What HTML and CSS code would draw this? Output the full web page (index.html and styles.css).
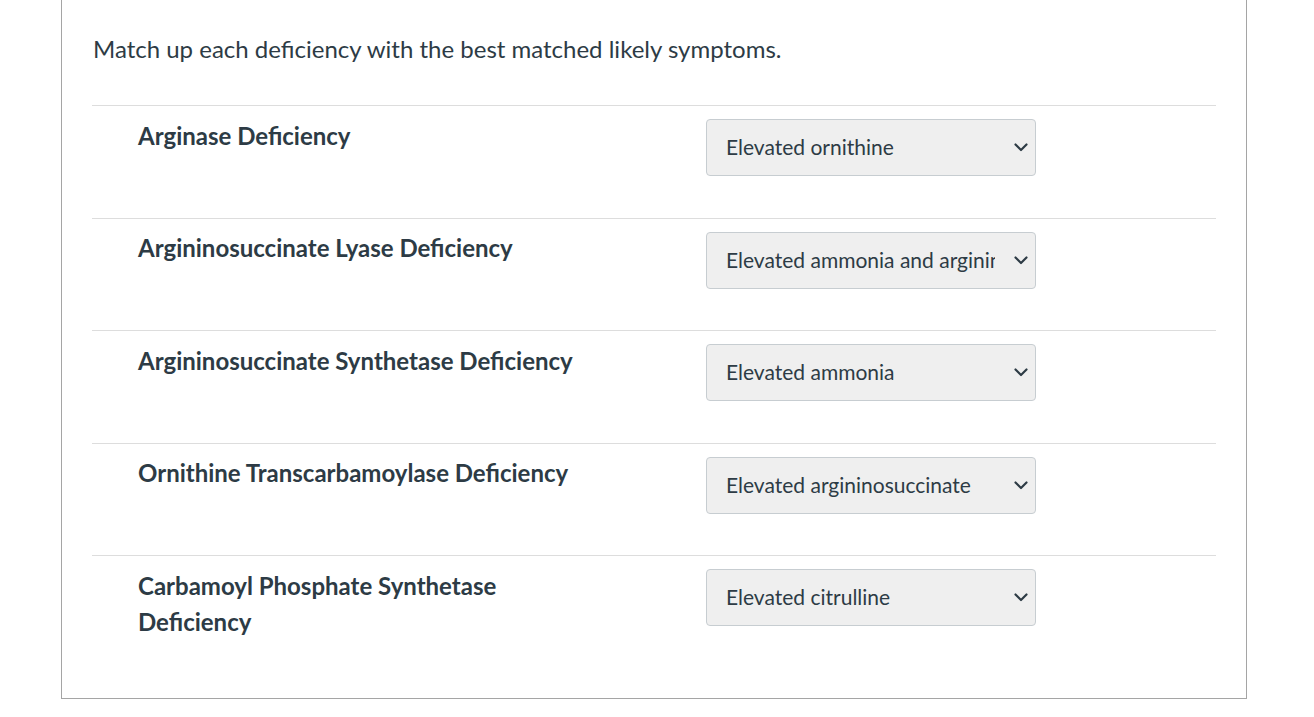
FILE: index.html
```html
<!DOCTYPE html>
<html lang="en">
<head>
<meta charset="utf-8">
<title>Matching question</title>
<link rel="stylesheet" href="styles.css">
</head>
<body>
<div class="question">
  <p class="prompt">Match up each deficiency with the best matched likely symptoms.</p>
  <div class="answers">
    <div class="row">
      <div class="label">Arginase Deficiency</div>
      <div class="select-wrap">
        <select class="choice"><option>Elevated ornithine</option></select>
        <svg class="chev" viewBox="0 0 14 9" width="14" height="9"><path d="M1.5 1.5 L7 7 L12.5 1.5" fill="none" stroke="#2d3b45" stroke-width="2.2" stroke-linecap="round" stroke-linejoin="round"/></svg>
      </div>
    </div>
    <div class="row">
      <div class="label">Argininosuccinate Lyase Deficiency</div>
      <div class="select-wrap">
        <select class="choice"><option>Elevated ammonia and arginine</option></select>
        <svg class="chev" viewBox="0 0 14 9" width="14" height="9"><path d="M1.5 1.5 L7 7 L12.5 1.5" fill="none" stroke="#2d3b45" stroke-width="2.2" stroke-linecap="round" stroke-linejoin="round"/></svg>
      </div>
    </div>
    <div class="row">
      <div class="label">Argininosuccinate Synthetase Deficiency</div>
      <div class="select-wrap">
        <select class="choice"><option>Elevated ammonia</option></select>
        <svg class="chev" viewBox="0 0 14 9" width="14" height="9"><path d="M1.5 1.5 L7 7 L12.5 1.5" fill="none" stroke="#2d3b45" stroke-width="2.2" stroke-linecap="round" stroke-linejoin="round"/></svg>
      </div>
    </div>
    <div class="row">
      <div class="label">Ornithine Transcarbamoylase Deficiency</div>
      <div class="select-wrap">
        <select class="choice"><option>Elevated argininosuccinate</option></select>
        <svg class="chev" viewBox="0 0 14 9" width="14" height="9"><path d="M1.5 1.5 L7 7 L12.5 1.5" fill="none" stroke="#2d3b45" stroke-width="2.2" stroke-linecap="round" stroke-linejoin="round"/></svg>
      </div>
    </div>
    <div class="row">
      <div class="label">Carbamoyl Phosphate Synthetase Deficiency</div>
      <div class="select-wrap">
        <select class="choice"><option>Elevated citrulline</option></select>
        <svg class="chev" viewBox="0 0 14 9" width="14" height="9"><path d="M1.5 1.5 L7 7 L12.5 1.5" fill="none" stroke="#2d3b45" stroke-width="2.2" stroke-linecap="round" stroke-linejoin="round"/></svg>
      </div>
    </div>
  </div>
</div>
</body>
</html>
```
FILE: styles.css
```css
html, body {
  margin: 0;
  padding: 0;
  background: #ffffff;
}
body {
  font-family: Lato, "Noto Sans", sans-serif;
  color: #2d3b45;
}
.question {
  box-sizing: border-box;
  width: 1186px;
  margin-left: 61px;
  border: 1px solid #a5a5a5;
  border-top: none;
  padding: 31px 30px 30px 30px;
}
.prompt {
  margin: 0 0 38px 1px;
  font-size: 24px;
  line-height: 36px;
}
.row {
  box-sizing: border-box;
  height: 112.5px;
  border-top: 1px solid #dddddd;
  padding-top: 11.5px;
  display: flex;
  align-items: flex-start;
}
.label {
  box-sizing: border-box;
  width: 614px;
  padding-left: 46px;
  padding-right: 108px;
  font-size: 24px;
  line-height: 36px;
  font-weight: 700;
}
.select-wrap {
  position: relative;
  margin-top: 1.5px;
  width: 330px;
  height: 57px;
}
.choice {
  -webkit-appearance: none;
  appearance: none;
  box-sizing: border-box;
  width: 330px;
  height: 57px;
  margin: 0;
  padding: 0 40px 2px 19px;
  border: 1px solid #c7cdd1;
  border-radius: 4px;
  background: #efefef;
  color: #2d3b45;
  font-family: Lato, "Noto Sans", sans-serif;
  font-size: 21px;
}
.chev {
  position: absolute;
  right: 8px;
  top: 24px;
  pointer-events: none;
}
```
